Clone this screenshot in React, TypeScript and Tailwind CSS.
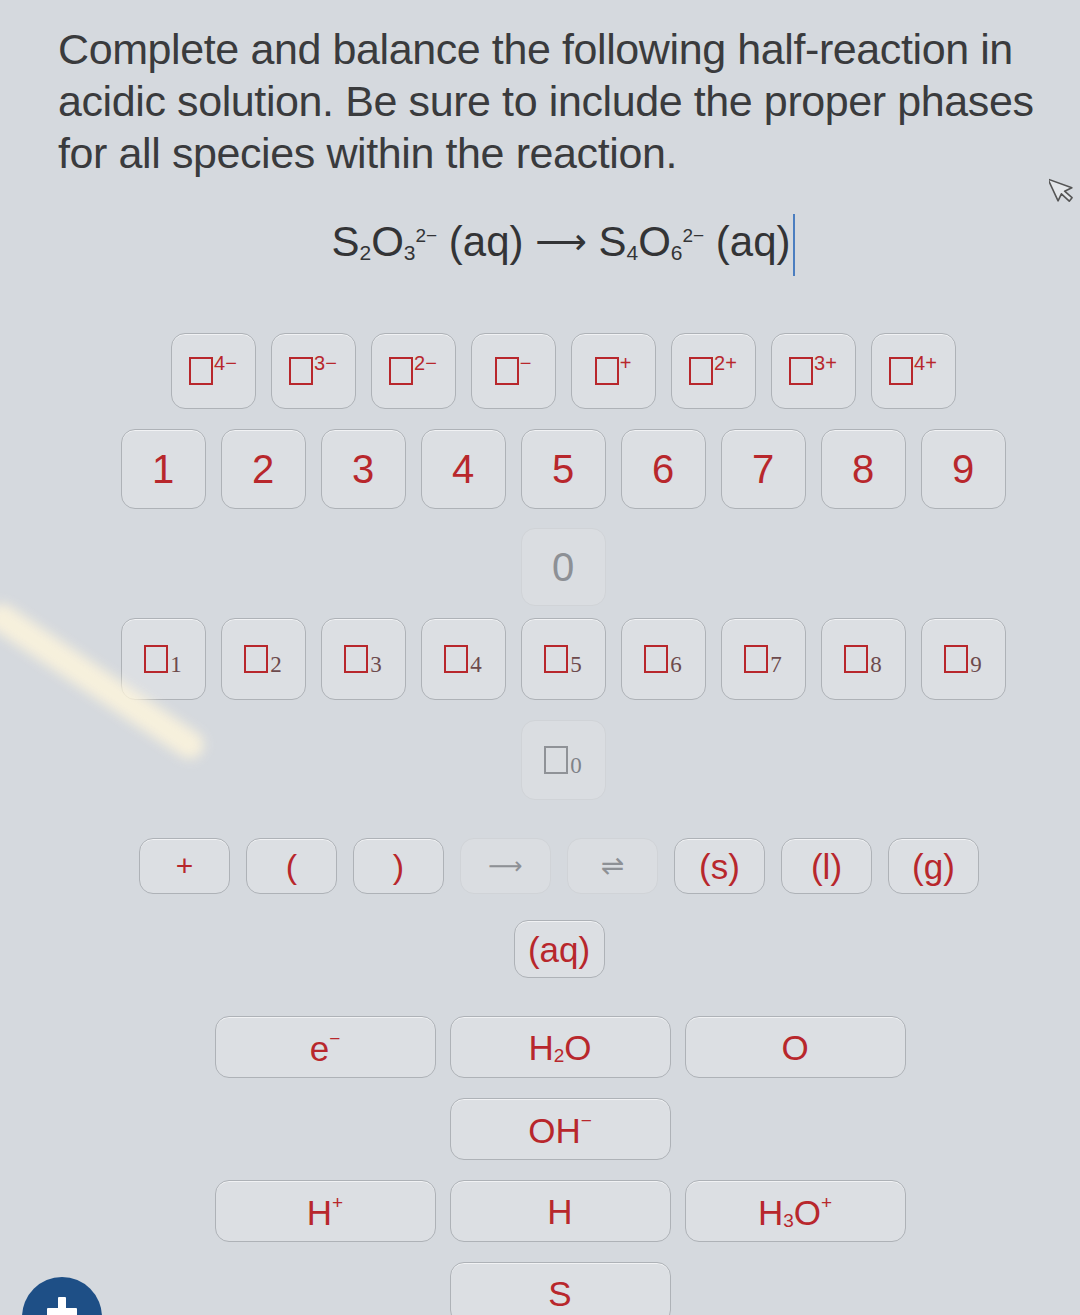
import React from "react";

const RED = "text-[#b8272c]";

function Btn({ w, h, children, muted = false, faint = false, className = "" }: { w: string; h: string; children: React.ReactNode; muted?: boolean; faint?: boolean; className?: string }) {
  return (
    <div
      className={`${w} ${h} ${className} shrink-0 flex items-center justify-center rounded-[14px] ${
        faint ? "border border-[#d0d3d7] bg-[#dadde1]" : "border border-[#aeb2b7] bg-[#dcdfe3] shadow-[0_1px_0_rgba(255,255,255,0.6)_inset]"
      } ${muted ? "text-[#8d9095]" : RED}`}
    >
      {children}
    </div>
  );
}

function Box({ gray = false }: { gray?: boolean }) {
  return <span className={`inline-block w-[24px] h-[28px] border-2 ${gray ? "border-[#8f9297]" : "border-[#b8272c]"}`} />;
}

function Charge({ sup }: { sup: string }) {
  return (
    <Btn w="w-[85px]" h="h-[76px]">
      <span className="flex items-start">
        <Box />
        <span className="text-[20px] leading-none -mt-[4px] ml-[1px]">{sup}</span>
      </span>
    </Btn>
  );
}

function SubGlyph({ n, gray = false }: { n: string; gray?: boolean }) {
  return (
    <span className="flex items-end">
      <Box gray={gray} />
      <span className={`text-[23px] leading-none -mb-[3px] ml-[2px] ${gray ? "text-[#7f8288]" : "text-[#6d4a4c]"}`} style={{ fontFamily: '"Liberation Serif", serif' }}>
        {n}
      </span>
    </span>
  );
}

function Wide({ children }: { children: React.ReactNode }) {
  return (
    <Btn w="w-[221px]" h="h-[62px]">
      <span className="text-[35px] leading-none">{children}</span>
    </Btn>
  );
}

const sub = "text-[21px] align-[-4px]";
const sup = "text-[19px] align-[14px]";
const sm = "text-[19px]";

export default function App() {
  return (
    <div className="relative w-[1080px] h-[1315px] overflow-hidden bg-[#d5d9de]" style={{ fontFamily: '"Liberation Sans", Arial, sans-serif' }}>
      {/* Title */}
      <div className="pl-[58px] pt-[23px] pr-[26px] text-[#3a3b3d] text-[43px] leading-[52px] tracking-[-0.4px]">
        Complete and balance the following half-reaction in acidic solution. Be sure to include the proper phases for all species within the reaction.
      </div>

      {/* Equation */}
      <div className="pl-[46px] mt-[27px] flex justify-center">
        <div className="flex items-center text-[#333436] text-[42px] leading-[60px]">
          <span>
            S<span className={sub}>2</span>O<span className={sub}>3</span>
            <span className={sup}>2−</span> (aq) <span className="text-[36px] align-[2px]" style={{ fontFamily: '"DejaVu Sans", sans-serif' }}>⟶</span> S<span className={sub}>4</span>O<span className={sub}>6</span>
            <span className={sup}>2−</span> (aq)
          </span>
          <span className="inline-block w-[2px] h-[62px] bg-[#4b7ec0] ml-[2px]" />
        </div>
      </div>

      <div className="pl-[46px] flex flex-col items-center">
        {/* Charges */}
        <div className="mt-[50px] flex gap-[15px]">
          {["4−", "3−", "2−", "−", "+", "2+", "3+", "4+"].map((s) => (
            <Charge key={s} sup={s} />
          ))}
        </div>

        {/* Numbers */}
        <div className="mt-[20px] flex gap-[15px]">
          {["1", "2", "3", "4", "5", "6", "7", "8", "9"].map((n) => (
            <Btn key={n} w="w-[85px]" h="h-[80px]">
              <span className="text-[40px] leading-none">{n}</span>
            </Btn>
          ))}
        </div>
        <div className="mt-[19px]">
          <Btn w="w-[85px]" h="h-[78px]" faint muted>
            <span className="text-[40px] leading-none">0</span>
          </Btn>
        </div>

        {/* Subscripts */}
        <div className="mt-[12px] flex gap-[15px]">
          {["1", "2", "3", "4", "5", "6", "7", "8", "9"].map((n) => (
            <Btn key={n} w="w-[85px]" h="h-[82px]">
              <SubGlyph n={n} />
            </Btn>
          ))}
        </div>
        <div className="mt-[20px]">
          <Btn w="w-[85px]" h="h-[80px]" faint muted>
            <SubGlyph n="0" gray />
          </Btn>
        </div>

        {/* Symbols */}
        <div className="mt-[38px] flex gap-[16px] -ml-[8px]">
          <Btn w="w-[91px]" h="h-[56px]">
            <span className="text-[30px] leading-none">+</span>
          </Btn>
          <Btn w="w-[91px]" h="h-[56px]">
            <span className="text-[34px] leading-none">(</span>
          </Btn>
          <Btn w="w-[91px]" h="h-[56px]">
            <span className="text-[34px] leading-none">)</span>
          </Btn>
          <Btn w="w-[91px]" h="h-[56px]" faint muted>
            <span className="text-[24px] leading-none" style={{ fontFamily: '"DejaVu Sans", sans-serif' }}>⟶</span>
          </Btn>
          <Btn w="w-[91px]" h="h-[56px]" faint muted>
            <span className="text-[28px] leading-none" style={{ fontFamily: '"DejaVu Sans", sans-serif' }}>⇌</span>
          </Btn>
          <Btn w="w-[91px]" h="h-[56px]">
            <span className="text-[35px] leading-none">(s)</span>
          </Btn>
          <Btn w="w-[91px]" h="h-[56px]">
            <span className="text-[35px] leading-none">(l)</span>
          </Btn>
          <Btn w="w-[91px]" h="h-[56px]">
            <span className="text-[35px] leading-none">(g)</span>
          </Btn>
        </div>
        <div className="mt-[26px] -ml-[8px]">
          <Btn w="w-[91px]" h="h-[58px]">
            <span className="text-[35px] leading-none">(aq)</span>
          </Btn>
        </div>

        {/* Bottom grid */}
        <div className="mt-[38px] -ml-[6px] grid grid-cols-[221px_221px_221px] gap-x-[14px] gap-y-[20px]">
          <Wide>
            e<span className={`${sm} align-[16px]`}>−</span>
          </Wide>
          <Wide>
            H<span className={`${sm} align-[-2px]`}>2</span>O
          </Wide>
          <Wide>O</Wide>
          <div />
          <Wide>
            OH<span className={`${sm} align-[16px]`}>−</span>
          </Wide>
          <div />
          <Wide>
            H<span className={`${sm} align-[16px]`}>+</span>
          </Wide>
          <Wide>H</Wide>
          <Wide>
            H<span className={`${sm} align-[-2px]`}>3</span>O<span className={`${sm} align-[16px]`}>+</span>
          </Wide>
          <div />
          <Wide>S</Wide>
          <div />
        </div>
      </div>

      {/* Mouse cursor */}
      <svg className="absolute left-[1049px] top-[170px]" width="30" height="38" viewBox="0 0 30 38">
        <path d="M4 4 L4 28 L10 23 L14 33 L18 31 L14 22 L22 22 Z" fill="#e4e7ea" stroke="#555" strokeWidth="1.6" strokeLinejoin="round" transform="rotate(-25 13 18)" />
      </svg>

      {/* Light streak (photo glare) */}
      <div className="absolute left-[-10px] top-[596px] w-[255px] h-[28px] rounded-full bg-[#fff6dc] opacity-80 blur-[6px] rotate-[34deg] origin-left" />

      {/* Floating blue button */}
      <div className="absolute left-[22px] top-[1277px] w-[80px] h-[80px] rounded-full bg-[#1e4f86]">
        <div className="absolute left-[36px] top-[20px] w-[8px] h-[30px] bg-white rounded-[1px]" />
        <div className="absolute left-[25px] top-[31px] w-[30px] h-[8px] bg-white rounded-[1px]" />
      </div>
    </div>
  );
}
